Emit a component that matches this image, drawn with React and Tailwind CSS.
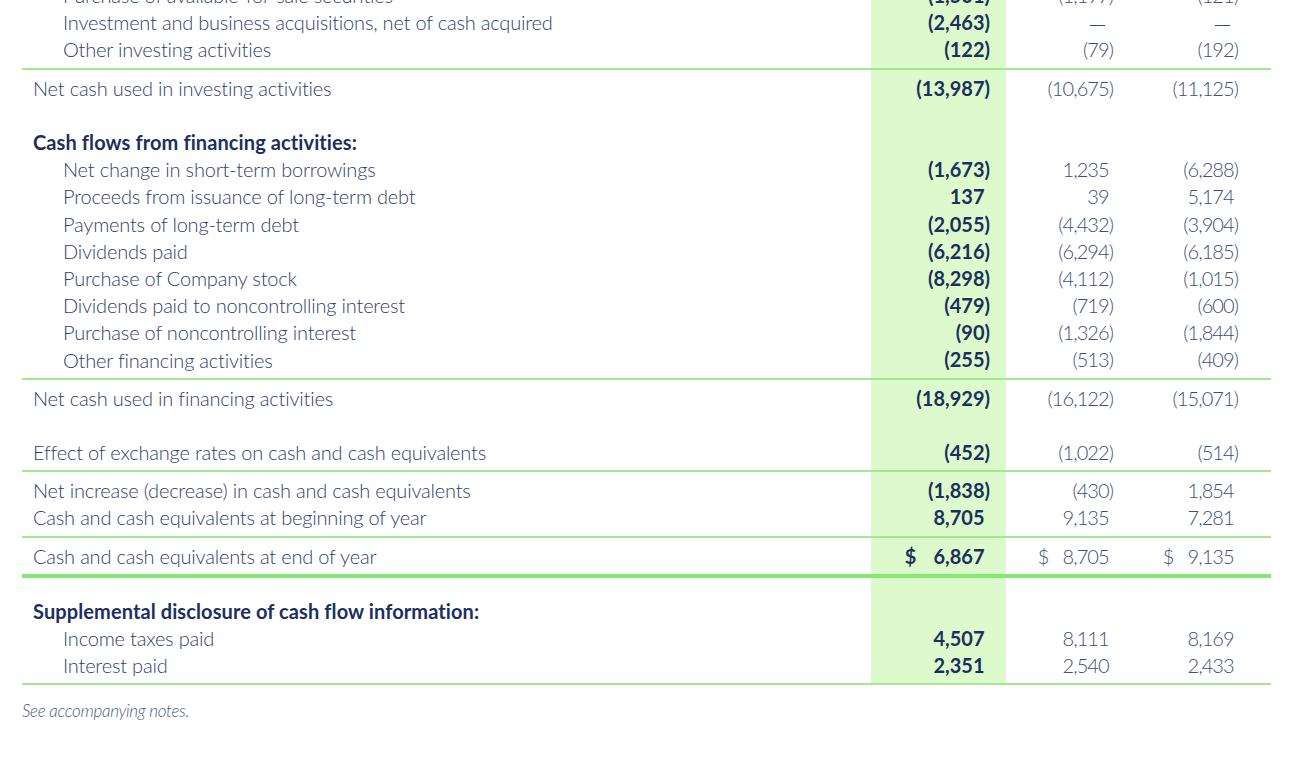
const GREEN = "bg-[#dcfacc]";

const rows = [
  { t: "row", label: "Purchase of available-for-sale securities", indent: true, v: ["(1,501)", "(1,197)", "(121)"] },
  { t: "row", label: "Investment and business acquisitions, net of cash acquired", indent: true, v: ["(2,463)", "—", "—"] },
  { t: "row", label: "Other investing activities", indent: true, v: ["(122)", "(79)", "(192)"] },
  { t: "line" },
  { t: "row", label: "Net cash used in investing activities", v: ["(13,987)", "(10,675)", "(11,125)"] },
  { t: "blank" },
  { t: "head", label: "Cash flows from financing activities:" },
  { t: "row", label: "Net change in short-term borrowings", indent: true, v: ["(1,673)", "1,235", "(6,288)"] },
  { t: "row", label: "Proceeds from issuance of long-term debt", indent: true, v: ["137", "39", "5,174"] },
  { t: "row", label: "Payments of long-term debt", indent: true, v: ["(2,055)", "(4,432)", "(3,904)"] },
  { t: "row", label: "Dividends paid", indent: true, v: ["(6,216)", "(6,294)", "(6,185)"] },
  { t: "row", label: "Purchase of Company stock", indent: true, v: ["(8,298)", "(4,112)", "(1,015)"] },
  { t: "row", label: "Dividends paid to noncontrolling interest", indent: true, v: ["(479)", "(719)", "(600)"] },
  { t: "row", label: "Purchase of noncontrolling interest", indent: true, v: ["(90)", "(1,326)", "(1,844)"] },
  { t: "row", label: "Other financing activities", indent: true, v: ["(255)", "(513)", "(409)"] },
  { t: "line" },
  { t: "row", label: "Net cash used in financing activities", v: ["(18,929)", "(16,122)", "(15,071)"] },
  { t: "blank" },
  { t: "row", label: "Effect of exchange rates on cash and cash equivalents", v: ["(452)", "(1,022)", "(514)"] },
  { t: "line" },
  { t: "row", label: "Net increase (decrease) in cash and cash equivalents", v: ["(1,838)", "(430)", "1,854"] },
  { t: "row", label: "Cash and cash equivalents at beginning of year", v: ["8,705", "9,135", "7,281"] },
  { t: "line" },
  { t: "row", label: "Cash and cash equivalents at end of year", dollar: true, v: ["6,867", "8,705", "9,135"] },
  { t: "thick" },
  { t: "head", label: "Supplemental disclosure of cash flow information:" },
  { t: "row", label: "Income taxes paid", indent: true, v: ["4,507", "8,111", "8,169"] },
  { t: "row", label: "Interest paid", indent: true, v: ["2,351", "2,540", "2,433"] },
  { t: "line", last: true },
];

const pads = ["pr-[16px]", "pr-[25px]", "pr-[33px]"];

function Value({ text, dollar, col }) {
  if (text === "—") {
    return <span className="inline-block h-[1px] w-[15px] bg-[#3c4f78] align-middle mr-[8px]" />;
  }
  const hang = !text.endsWith(")");
  return (
    <span className="whitespace-nowrap">
      {dollar && <span>$</span>}
      {dollar && <span className={col === 0 ? "inline-block w-[17px]" : "inline-block w-[14px]"} />}
      {text}
      {hang && <span className="invisible">)</span>}
    </span>
  );
}

function Line({ thick, last }) {
  const bar = thick ? "h-[4px] bg-[#86e872]" : "h-[2px] bg-[#a3e78f]";
  return (
    <div className="grid grid-cols-[849px_135px_132px_133px]">
      <div className={thick ? "pt-[4px] pb-[20px]" : "pt-[4px] pb-[5px]"}>
        <div className={bar} />
      </div>
      <div className={last ? "" : GREEN}>
        <div className={last ? `pt-[4px] ${GREEN}` : "pt-[4px]"} />
        <div className={bar} />
      </div>
      <div className="pt-[4px]">
        <div className={bar} />
      </div>
      <div className="pt-[4px]">
        <div className={bar} />
      </div>
    </div>
  );
}

export default function App() {
  return (
    <div
      className="w-[1296px] h-[760px] overflow-hidden bg-white text-[20px] text-[#2f4170]"
      style={{ fontFamily: "Lato, 'Open Sans', sans-serif" }}
    >
      <div className="-mt-[18px] pl-[22px] pr-[25px]">
        {rows.map((r, i) => {
          if (r.t === "line") return <Line key={i} last={r.last} />;
          if (r.t === "thick") return <Line key={i} thick />;
          return (
            <div key={i} className="grid h-[27.2px] grid-cols-[849px_135px_132px_133px] items-center leading-[27px]">
              <div
                className={`${r.indent ? "pl-[41px]" : "pl-[11px]"} ${
                  r.t === "head" ? "font-bold text-[#1c2f5e] tracking-[0.1px]" : "font-light tracking-[-0.2px]"
                } whitespace-nowrap`}
              >
                {r.label}
              </div>
              {[0, 1, 2].map((c) => (
                <div
                  key={c}
                  className={`h-full text-right ${pads[c]} ${
                    c === 0 ? `${GREEN} font-bold text-[#1c2f5e]` : "font-light tracking-[-0.9px] text-[#3c4f78]"
                  }`}
                >
                  {r.v && <Value text={r.v[c]} dollar={r.dollar} col={c} />}
                </div>
              ))}
            </div>
          );
        })}
        <p className="mt-[8px] text-[17px] italic font-light tracking-[-0.3px] text-[#4a5b80]">See accompanying notes.</p>
      </div>
    </div>
  );
}
